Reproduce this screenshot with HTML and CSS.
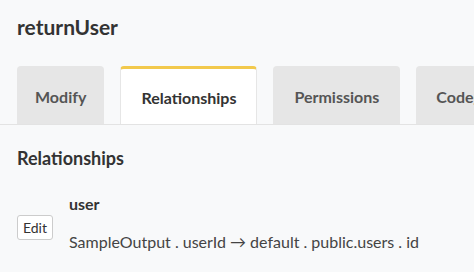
FILE: index.html
```html
<!DOCTYPE html>
<html lang="en">
<head>
    <meta charset="UTF-8">
    <meta name="viewport" content="width=device-width, initial-scale=1.0">
    <title>returnUser</title>
    <link rel="stylesheet" href="styles.css">
</head>
<body>

    <h1 class="title">returnUser</h1>

    <!-- Tabs -->
    <ul class="tabs">
        <li class="tab tab-modify">Modify</li>
        <li class="tab active">Relationships</li>
        <li class="tab tab-perms">Permissions</li>
        <li class="tab">Codegen</li>
    </ul>

    <!-- Relationships -->
    <div class="section">
        <h2 class="section-title">Relationships</h2>
        <div class="rel-row">
            <button class="edit-btn">Edit</button>
            <div class="rel-info">
                <div class="rel-name">user</div>
                <div class="rel-path">SampleOutput . userId &rarr; default . public.users . id</div>
            </div>
        </div>
    </div>

</body>
</html>
```

FILE: styles.css
```css
body {
    margin: 0;
    font-family: Lato, "Open Sans", sans-serif;
    background-color: #f8f9fa;
    color: #333;
    overflow: hidden;
}
.title {
    margin: 0;
    padding: 14px 17px 0;
    font-size: 21px;
    line-height: 26px;
    font-weight: bold;
    color: #333;
}
.tabs {
    display: flex;
    gap: 16px;
    list-style: none;
    margin: 26px 0 0;
    padding: 0 17px;
    border-bottom: 1px solid #e3e3e3;
    white-space: nowrap;
    overflow: hidden;
}
.tab {
    flex-shrink: 0;
    height: 58px;
    line-height: 62px;
    padding: 0 20px;
    background: #e6e6e6;
    border-radius: 4px 4px 0 0;
    font-size: 16px;
    font-weight: bold;
    color: #555;
}
.tab-modify {
    padding: 0 18px;
}
.tab-perms {
    padding: 0 21px;
}
.tab.active {
    background: #fff;
    color: #333;
    padding: 0 20px;
    height: 56px;
    line-height: 58px;
    border-top: 3px solid #f2c94c;
    border-left: 1px solid #e6e6e6;
    border-right: 1px solid #e6e6e6;
    margin-bottom: -1px;
}
.section {
    padding: 21px 17px 0;
}
.section-title {
    margin: 0;
    font-size: 18px;
    line-height: 24px;
    font-weight: bold;
    color: #333;
}
.rel-row {
    display: flex;
    align-items: flex-start;
    gap: 16px;
    margin-top: 24px;
}
.edit-btn {
    margin-top: 21px;
    width: 36px;
    height: 25px;
    padding: 0;
    background: #fff;
    border: 1px solid #ccc;
    border-radius: 3px;
    font-family: inherit;
    font-size: 14px;
    color: #333;
}
.rel-name {
    font-size: 16px;
    line-height: 20px;
    font-weight: bold;
}
.rel-path {
    margin-top: 18px;
    font-size: 16px;
    line-height: 20px;
    color: #444;
}
```
